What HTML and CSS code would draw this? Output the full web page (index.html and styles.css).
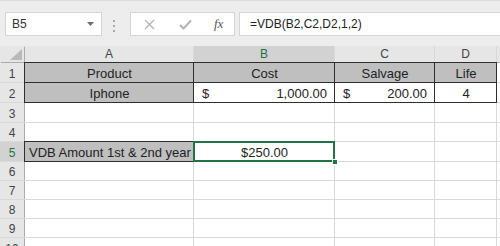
FILE: index.html
```html
<!DOCTYPE html>
<html lang="en">
<head>
    <meta charset="UTF-8">
    <title>VDB</title>
    <link rel="stylesheet" href="styles.css">
</head>
<body>
    <!-- Name box + formula bar -->
    <div class="toolbar">
        <div class="namebox">
            <span>B5</span>
            <svg class="drop" width="8" height="5" viewBox="0 0 8 5"><polygon points="0,0 7,0 3.5,4" fill="#6d6d6d"/></svg>
        </div>
        <svg class="grip" width="3" height="12" viewBox="0 0 3 12">
            <rect x="0" y="0" width="2" height="2" fill="#a8a8a8"/>
            <rect x="0" y="5" width="2" height="2" fill="#a8a8a8"/>
            <rect x="0" y="10" width="2" height="2" fill="#a8a8a8"/>
        </svg>
        <div class="fxbox">
            <svg width="11" height="11" viewBox="0 0 11 11"><path d="M1 1 L10 10 M10 1 L1 10" stroke="#b4b4b4" stroke-width="1.3" fill="none"/></svg>
            <svg width="13" height="11" viewBox="0 0 13 11"><path d="M1 6 L4.5 9.5 L12 1.5" stroke="#b4b4b4" stroke-width="2" fill="none"/></svg>
            <span class="fx">fx</span>
        </div>
        <div class="formula">=VDB(B2,C2,D2,1,2)</div>
    </div>

    <!-- Worksheet grid -->
    <div class="sheet">
        <div class="hdr corner"><svg width="12" height="11" viewBox="0 0 12 11"><polygon points="12,0 12,11 0,11" fill="#b9b9b9"/></svg></div>
        <div class="hdr col">A</div>
        <div class="hdr col sel-col">B</div>
        <div class="hdr col">C</div>
        <div class="hdr col">D</div>
        <div class="hdr col"></div>

        <div class="hdr row">1</div>
        <div class="cell fill bd center">Product</div>
        <div class="cell fill bd center">Cost</div>
        <div class="cell fill bd center">Salvage</div>
        <div class="cell fill bd center">Life</div>
        <div class="cell"></div>

        <div class="hdr row">2</div>
        <div class="cell fill bd center">Iphone</div>
        <div class="cell bd money"><span>$</span><span>1,000.00</span></div>
        <div class="cell bd money"><span>$</span><span>200.00</span></div>
        <div class="cell bd center">4</div>
        <div class="cell"></div>

        <div class="hdr row">3</div>
        <div class="cell"></div><div class="cell"></div><div class="cell"></div><div class="cell"></div><div class="cell"></div>

        <div class="hdr row">4</div>
        <div class="cell"></div><div class="cell"></div><div class="cell"></div><div class="cell"></div><div class="cell"></div>

        <div class="hdr row sel-row">5</div>
        <div class="cell fill bd">VDB Amount 1st &amp; 2nd year</div>
        <div class="cell center active">$250.00<span class="handle"></span></div>
        <div class="cell"></div><div class="cell"></div><div class="cell"></div>

        <div class="hdr row">6</div>
        <div class="cell"></div><div class="cell"></div><div class="cell"></div><div class="cell"></div><div class="cell"></div>

        <div class="hdr row">7</div>
        <div class="cell"></div><div class="cell"></div><div class="cell"></div><div class="cell"></div><div class="cell"></div>

        <div class="hdr row">8</div>
        <div class="cell"></div><div class="cell"></div><div class="cell"></div><div class="cell"></div><div class="cell"></div>

        <div class="hdr row">9</div>
        <div class="cell"></div><div class="cell"></div><div class="cell"></div><div class="cell"></div><div class="cell"></div>

        <div class="hdr row">10</div>
        <div class="cell"></div><div class="cell"></div><div class="cell"></div><div class="cell"></div><div class="cell"></div>
    </div>
</body>
</html>
```

FILE: styles.css
```css
/* Basic Reset */
* {
    box-sizing: border-box;
}

body {
    margin: 0;
    width: 500px;
    height: 246px;
    overflow: hidden;
    font-family: "Liberation Sans", Arial, sans-serif;
    background-color: #ededed;
}

/* Formula bar area */
.toolbar {
    height: 46px;
    display: flex;
    align-items: flex-start;
    padding: 12px 0 0 5px;
    border-top: 1px solid #dcdcdc;
    background-color: #ededed;
}

.namebox {
    width: 97px;
    height: 24px;
    margin-top: -1px;
    background-color: #fff;
    border: 1px solid #d4d4d4;
    display: flex;
    align-items: center;
    justify-content: space-between;
    padding: 0 6px 0 6px;
    font-size: 12px;
    color: #333;
}

.grip {
    margin: 7px 0 0 11px;
}

.fxbox {
    width: 105px;
    height: 24px;
    margin: -1px 0 0 14px;
    background-color: #fff;
    border: 1px solid #d4d4d4;
    display: flex;
    align-items: center;
    padding-left: 13px;
    gap: 24px;
}

.fxbox .fx {
    font-family: "Liberation Serif", serif;
    font-style: italic;
    font-size: 13px;
    color: #555;
    margin-left: -2px;
}

.formula {
    flex: 1;
    height: 24px;
    margin: -1px 0 0 4px;
    background-color: #fff;
    border: 1px solid #d4d4d4;
    border-right: none;
    padding: 4px 0 0 10px;
    font-size: 12px;
    color: #222;
}

/* Worksheet grid */
.sheet {
    display: grid;
    grid-template-columns: 24px 168px 140px 99px 61px 1fr;
    grid-template-rows: 16px 19px 19px 19px 18px 19px 18px 18px 18px 18px 20px;
    gap: 1px;
    background-color: #d9d9d9;
    font-size: 13px;
}

.hdr {
    background-color: #e6e6e6;
    color: #444;
    font-size: 12px;
    display: flex;
    align-items: center;
    justify-content: center;
}

.hdr.col {
    box-shadow: 0 1px 0 #ababab;
}

.hdr.row {
    box-shadow: 1px 0 0 #ababab;
    padding-top: 2px;
}

.corner {
    justify-content: flex-end;
    align-items: flex-end;
    padding: 0 2px 2px 0;
    box-shadow: 1px 1px 0 #ababab;
}

.sel-col {
    background-color: #d2d2d2;
    color: #217346;
    box-shadow: inset 0 -1px 0 #217346, 0 1px 0 #217346;
}

.hdr.sel-row {
    background-color: #d2d2d2;
    color: #217346;
    box-shadow: 1px 0 0 #217346;
}

.cell {
    background-color: #fff;
    color: #222;
    line-height: 15px;
    display: flex;
    align-items: flex-end;
    padding: 0 3px 1px 4px;
    white-space: nowrap;
    position: relative;
}

.cell.fill {
    background-color: #bfbfbf;
}

.cell.bd {
    box-shadow: 0 0 0 1px #2e2e2e;
}

.cell.center {
    justify-content: center;
}

.cell.money {
    justify-content: space-between;
    padding: 0 7px 1px 8px;
}

/* Selected cell */
.cell.active {
    z-index: 1;
    box-shadow: 0 0 0 1px #217346, inset 0 0 0 1px #217346;
}

.handle {
    position: absolute;
    right: -4px;
    bottom: -4px;
    width: 6px;
    height: 6px;
    background-color: #217346;
    border: 1px solid #fff;
}
```
